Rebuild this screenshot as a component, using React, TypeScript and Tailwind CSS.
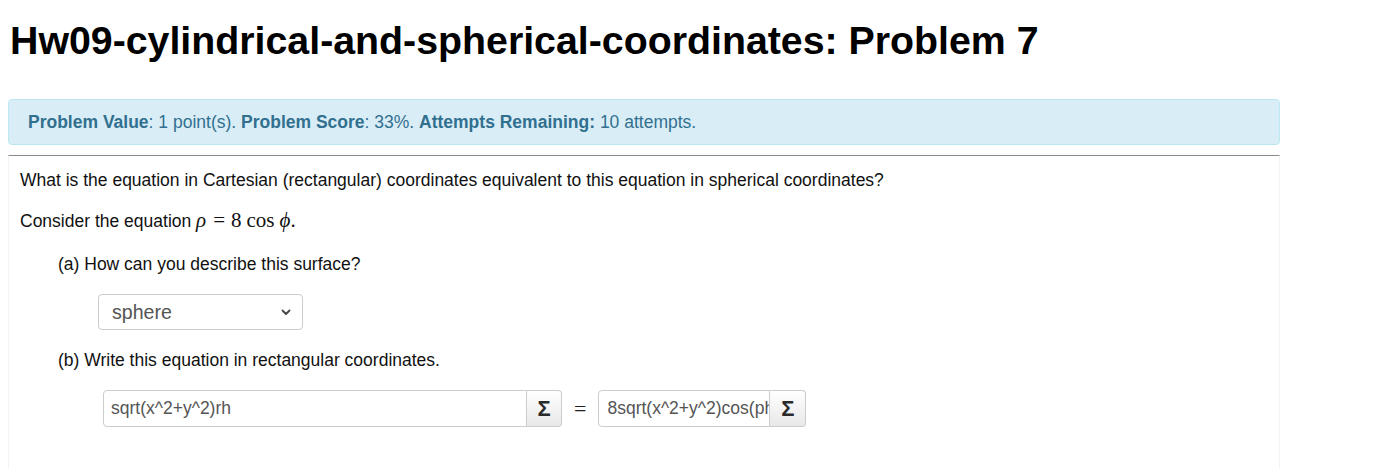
import React from "react";

function Sigma() {
  return (
    <span className="text-[22px] font-bold text-[#2a2a2a] leading-none" style={{ fontFamily: '"Liberation Sans", Arial, sans-serif' }}>
      Σ
    </span>
  );
}

export default function App() {
  return (
    <div className="bg-white min-h-[468px] text-[#111] font-['Liberation_Sans',Arial,sans-serif]">
      <h1 className="pl-[10px] pt-[18px] text-[39.3px] leading-[44px] font-bold text-black">
        Hw09-cylindrical-and-spherical-coordinates: Problem 7
      </h1>

      <div className="mt-[37px] ml-[8px] w-[1272px] h-[46px] flex items-center pl-[19px] rounded-[4px] border border-[#bce8f1] bg-[#d9edf7] text-[#31708f] text-[17.5px]">
        <span>
          <b>Problem Value</b>: 1 point(s). <b>Problem Score</b>: 33%. <b>Attempts Remaining:</b> 10 attempts.
        </span>
      </div>

      <div className="mt-[10px] ml-[8px] w-[1272px] border-t border-t-[#8a8a8a] border-x border-x-[#f3f3f3] pl-[11px] pt-[12px] pb-[60px] text-[17.5px] leading-[25px] text-[#111]">
        <p>What is the equation in Cartesian (rectangular) coordinates equivalent to this equation in spherical coordinates?</p>
        <p className="mt-[15px] flex items-baseline">
          <span>Consider the equation&nbsp;</span>
          <span className="text-[21px]" style={{ fontFamily: '"Liberation Serif", "DejaVu Serif", serif' }}>
            <i>ρ</i>
            <span className="ml-[7px] mr-[6px]">=</span>8<span className="ml-[5px]">cos</span>
            <i className="ml-[5px]">ϕ</i>.
          </span>
        </p>
        <p className="mt-[18px] pl-[38px]">(a) How can you describe this surface?</p>
        <div className="mt-[17px] ml-[78px] w-[205px] h-[36px] flex items-center justify-between border border-[#ccc] rounded-[4px] pl-[13px] pr-[10px] text-[19.6px] text-[#555]">
          <span>sphere</span>
          <svg width="12" height="12" viewBox="0 0 12 12" fill="none">
            <path d="M2.5 4.5 L6 8 L9.5 4.5" stroke="#444" strokeWidth="1.8" strokeLinecap="round" strokeLinejoin="round" />
          </svg>
        </div>
        <p className="mt-[18px] pl-[38px]">(b) Write this equation in rectangular coordinates.</p>
        <div className="mt-[17px] ml-[83px] flex items-center">
          <input
            readOnly
            value="sqrt(x^2+y^2)rh"
            className="w-[424px] h-[37px] border border-[#ccc] rounded-l-[4px] pl-[7px] text-[17.5px] text-[#555] outline-none bg-white"
          />
          <div className="w-[35px] h-[37px] flex items-center justify-center border border-l-0 border-[#ccc] rounded-r-[4px] bg-gradient-to-b from-white to-[#e8e8e8]">
            <Sigma />
          </div>
          <span className="ml-[12px] mr-[12px] text-[22px] text-[#222] leading-none" style={{ fontFamily: '"Liberation Serif", "DejaVu Serif", serif' }}>=</span>
          <input
            readOnly
            value="8sqrt(x^2+y^2)cos(phi)"
            className="w-[172px] h-[37px] border border-[#ccc] rounded-l-[4px] pl-[8px] text-[17.5px] text-[#555] outline-none bg-white"
          />
          <div className="w-[36px] h-[37px] flex items-center justify-center border border-l-0 border-[#ccc] rounded-r-[4px] bg-gradient-to-b from-white to-[#e8e8e8]">
            <Sigma />
          </div>
        </div>
      </div>
    </div>
  );
}
